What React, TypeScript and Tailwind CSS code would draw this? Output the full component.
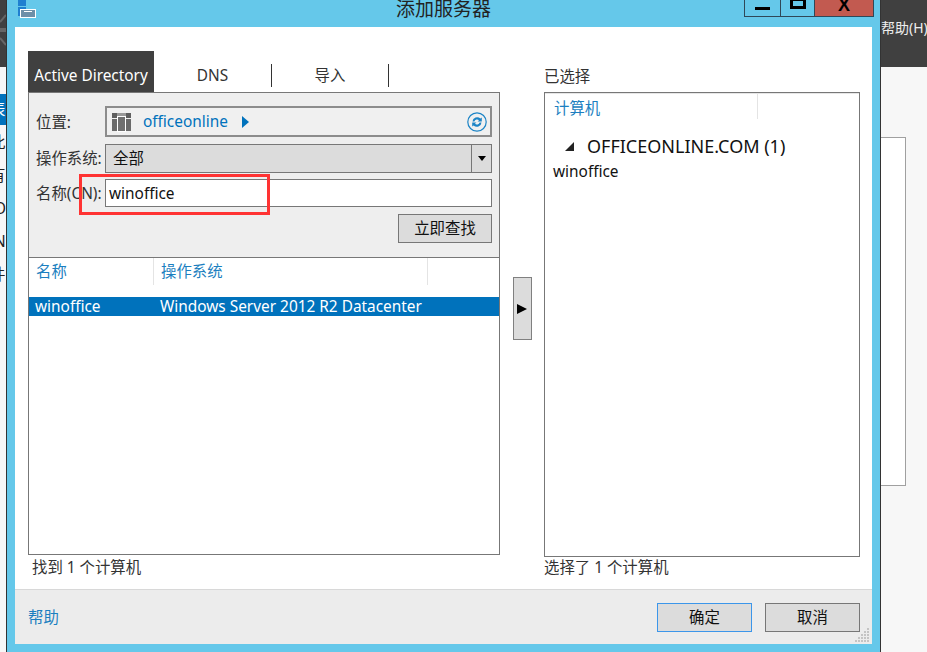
import React from "react";

const font = { fontFamily: '"Noto Sans", "Noto Sans CJK SC", sans-serif' };

function ServerIcon() {
  return (
    <svg width="20" height="20" viewBox="0 0 20 20" className="shrink-0">
      <rect x="0" y="1" width="5" height="5" fill="#5f5f5f" />
      <rect x="14" y="1" width="5" height="5" fill="#5f5f5f" />
      <rect x="5" y="1" width="9" height="3" fill="#9a9a9a" />
      <rect x="0" y="7" width="5" height="12" fill="#6a6a6a" />
      <rect x="14" y="7" width="5" height="12" fill="#6a6a6a" />
      <rect x="5" y="4" width="9" height="16" fill="#fff" />
      <rect x="6" y="5" width="7" height="14" fill="#707070" />
    </svg>
  );
}

function RefreshIcon() {
  return (
    <svg width="20" height="20" viewBox="0 0 20 20" className="shrink-0">
      <circle cx="10" cy="10" r="9.2" fill="none" stroke="#1c84c6" strokeWidth="1.2" />
      <path d="M5.5 9.5 A4.6 4.6 0 0 1 13.4 6.6 L14.8 5.4 L14.8 9.6 L10.6 9.6 L12 8.2 A2.8 2.8 0 0 0 7.4 9.5 Z" fill="#1c84c6" />
      <path d="M14.5 10.5 A4.6 4.6 0 0 1 6.6 13.4 L5.2 14.6 L5.2 10.4 L9.4 10.4 L8 11.8 A2.8 2.8 0 0 0 12.6 10.5 Z" fill="#1c84c6" />
    </svg>
  );
}

function AppIcon() {
  return (
    <svg width="20" height="20" viewBox="0 0 20 20" className="shrink-0">
      <rect x="1" y="0" width="8" height="6" fill="#1f7fd0" />
      <rect x="1" y="7" width="8" height="9" fill="#1f7fd0" />
      <rect x="3.5" y="9.5" width="15" height="8" fill="#6d8fa8" stroke="#fff" />
      <rect x="7" y="11" width="8" height="1" fill="#fff" />
    </svg>
  );
}

function Grip() {
  const dots = [
    [12, 0], [12, 3], [9, 3], [12, 6], [9, 6], [6, 6], [12, 9], [9, 9], [6, 9], [3, 9], [12, 12], [9, 12], [6, 12], [3, 12], [0, 12],
  ];
  return (
    <svg width="15" height="14" viewBox="0 0 15 14" className="absolute right-[2px] bottom-[2px]">
      {dots.map(([x, y], i) => (
        <rect key={i} x={x} y={y} width="2" height="2" fill="#c4c4c4" />
      ))}
    </svg>
  );
}

export default function App() {
  return (
    <div className="relative flex h-[652px] w-[927px] overflow-hidden bg-[#f7f7f7] text-[15.4px] text-[#333]" style={font}>
      {/* page behind, left */}
      <div className="flex w-[6px] shrink-0 flex-col overflow-hidden">
        <div className="h-[67px] shrink-0 bg-[#404040] pt-[14px]">
          <svg width="6" height="32" viewBox="0 0 6 32">
            <path d="M6 1 L0 8 M0 24 L6 31" stroke="#666" strokeWidth="2" fill="none" />
            <rect x="0" y="14" width="6" height="4" fill="#666" />
          </svg>
        </div>
        <div className="mt-[27px] flex h-[31px] w-[6px] shrink-0 items-center overflow-hidden whitespace-nowrap bg-[#0072bc] text-white">
          <span className="-ml-[10px]">表</span>
        </div>
        <div className="flex flex-col whitespace-nowrap leading-[33px] text-[#222]">
          <span className="-ml-[10px] mt-[1px]">此</span>
          <span className="-ml-[10px]">有</span>
          <span className="-ml-[6px]">O</span>
          <span className="-ml-[6px]">N</span>
          <span className="-ml-[10px]">件</span>
        </div>
      </div>

      {/* dialog window */}
      <div className="relative flex w-[875px] shrink-0 flex-col border-x border-[#333] bg-[#65c8ea]">
        <div className="flex h-[27px] shrink-0 items-start justify-between overflow-hidden">
          <div className="ml-[10px]"><AppIcon /></div>
          <div className="absolute left-0 right-0 -top-[4px] text-center text-[19px] leading-[26px] text-[#222]">添加服务器</div>
          <div className="z-10 mr-[6px] flex h-[17px] border-x border-b border-[#2f4858]">
            <div className="flex w-[36px] justify-center border-r border-[#2f4858] pt-[7px]">
              <div className="h-[3px] w-[15px] bg-black" />
            </div>
            <div className="flex w-[33px] justify-center">
              <div className="-mt-[2px] h-[11px] w-[16px] border-[3px] border-black" />
            </div>
            <div className="flex w-[59px] justify-center border-l border-[#2f4858] bg-[#c25a50] text-[18px] font-bold leading-[10px] text-black">
              <span style={{ fontFamily: '"Liberation Sans"' }}>X</span>
            </div>
          </div>
        </div>

        <div className="mx-[8px] flex min-h-0 flex-1 flex-col bg-white">
          <div className="flex min-h-0 flex-1 pl-[13px] pr-[12px]">
            {/* left column */}
            <div className="flex w-[472px] shrink-0 flex-col pt-[24px]">
              <div className="flex h-[41px] shrink-0 items-end">
                <div className="flex h-[41px] w-[126px] items-center justify-center bg-[#404040] pt-[9px] text-white">Active Directory</div>
                <div className="mb-[5px] w-[118px] border-r border-[#333] text-center leading-[23px]">DNS</div>
                <div className="mb-[5px] w-[117px] border-r border-[#333] text-center leading-[23px]">导入</div>
              </div>
              <div className="flex h-[166px] shrink-0 flex-col border border-[#777] bg-[#eeeeee] pl-[7px] pr-[7px] pt-[13px]">
                <div className="flex h-[31px] items-center">
                  <span className="w-[69px] shrink-0 pt-[3px]">位置:</span>
                  <div className="flex h-[31px] flex-1 items-center border-2 border-[#8c8c8c] bg-[#f0f0f0] pl-[5px] pr-[3px]">
                    <ServerIcon />
                    <span className="ml-[11px] text-[#0072bc]">officeonline</span>
                    <span className="ml-[14px] h-0 w-0 border-y-[6px] border-l-[7px] border-y-transparent border-l-[#0072bc]" />
                    <span className="flex-1" />
                    <RefreshIcon />
                  </div>
                </div>
                <div className="mt-[7px] flex h-[29px] items-center">
                  <span className="w-[69px] shrink-0">操作系统:</span>
                  <div className="flex h-[29px] flex-1 items-center border border-[#777] bg-[#dcdcdc] pl-[7px] text-[#111]">
                    <span className="flex-1">全部</span>
                    <div className="flex h-full w-[20px] items-center justify-center border-l border-[#777]">
                      <span className="h-0 w-0 border-x-[4px] border-t-[5px] border-x-transparent border-t-black" />
                    </div>
                  </div>
                </div>
                <div className="mt-[6px] flex h-[28px] items-center">
                  <span className="w-[69px] shrink-0 whitespace-nowrap pt-[2px]">名称(CN):</span>
                  <div className="flex h-[28px] flex-1 items-center border border-[#777] bg-white pl-[3px] pt-[2px] text-[#111]">winoffice</div>
                </div>
                <div className="mt-[7px] flex justify-end">
                  <div className="flex h-[29px] w-[94px] items-center justify-center border border-[#777] bg-[#dcdcdc] text-[#111]">立即查找</div>
                </div>
              </div>
              <div className="flex h-[297px] shrink-0 flex-col border-x border-b border-[#777]">
                <div className="flex h-[27px] shrink-0 text-[#1c7fc0]">
                  <div className="flex w-[125px] items-center border-r border-[#e4e4e4] pl-[7px]">名称</div>
                  <div className="flex w-[274px] items-center border-r border-[#e4e4e4] pl-[7px]">操作系统</div>
                </div>
                <div className="mt-[12px] flex h-[19px] items-center bg-[#0072bc] pt-[1px] text-white">
                  <span className="w-[131px] pl-[6px]">winoffice</span>
                  <span>Windows Server 2012 R2 Datacenter</span>
                </div>
              </div>
              <div className="pl-[4px] pt-[2px] leading-[21px]">找到 1 个计算机</div>
            </div>

            {/* middle arrow */}
            <div className="flex w-[44px] shrink-0 justify-center pt-[250px]">
              <div className="flex h-[63px] w-[19px] items-center justify-center border border-[#808080] bg-[#dcdcdc]">
                <span className="h-0 w-0 border-y-[5px] border-l-[10px] border-y-transparent border-l-black" />
              </div>
            </div>

            {/* right column */}
            <div className="flex w-[316px] shrink-0 flex-col">
              <div className="flex h-[65px] shrink-0 items-end pb-[5px] leading-[21px]">已选择</div>
              <div className="flex h-[465px] shrink-0 flex-col border border-[#777]">
                <div className="flex h-[26px] shrink-0 border-t border-[#e6e6e6]">
                  <div className="flex w-[213px] items-center border-r border-[#e4e4e4] pl-[9px] pt-[5px] text-[#1c7fc0]">计算机</div>
                </div>
                <div className="mt-[13px] flex h-[29px] items-center pl-[20px] text-[18px] text-[#111]">
                  <span className="mr-[13px] h-0 w-0 border-b-[9px] border-l-[9px] border-b-[#222] border-l-transparent" />
                  OFFICEONLINE.COM (1)
                </div>
                <div className="pl-[8px] leading-[22px] text-[#111]">winoffice</div>
              </div>
              <div className="leading-[21px]">选择了 1 个计算机</div>
            </div>
          </div>

          <div className="relative flex h-[55px] shrink-0 items-center border-t border-[#d8d8d8] bg-[#ececec] pl-[13px] pr-[12px] pt-[1px]">
            <span className="text-[#1c7fc0]">帮助</span>
            <span className="flex-1" />
            <div className="flex h-[29px] w-[95px] items-center justify-center border border-[#3c96ea] bg-[#dcdcdc] text-[#111]">确定</div>
            <div className="ml-[13px] flex h-[29px] w-[95px] items-center justify-center border border-[#777] bg-[#dcdcdc] text-[#111]">取消</div>
            <Grip />
          </div>
        </div>
        <div className="h-[8px] shrink-0" />
      </div>

      {/* page behind, right */}
      <div className="flex min-w-0 flex-1 flex-col">
        <div className="flex h-[67px] shrink-0 items-center overflow-hidden whitespace-nowrap bg-[#404040] pb-[13px] text-[14px] text-[#eee]">帮助(H)</div>
        <div className="mt-[70px] h-[349px] w-[25px] border border-l-0 border-[#a0a0a0] bg-white" />
      </div>

      {/* red annotation */}
      <div className="absolute left-[79px] top-[174px] h-[41px] w-[191px] border-[3px] border-[#f33]" />
    </div>
  );
}
